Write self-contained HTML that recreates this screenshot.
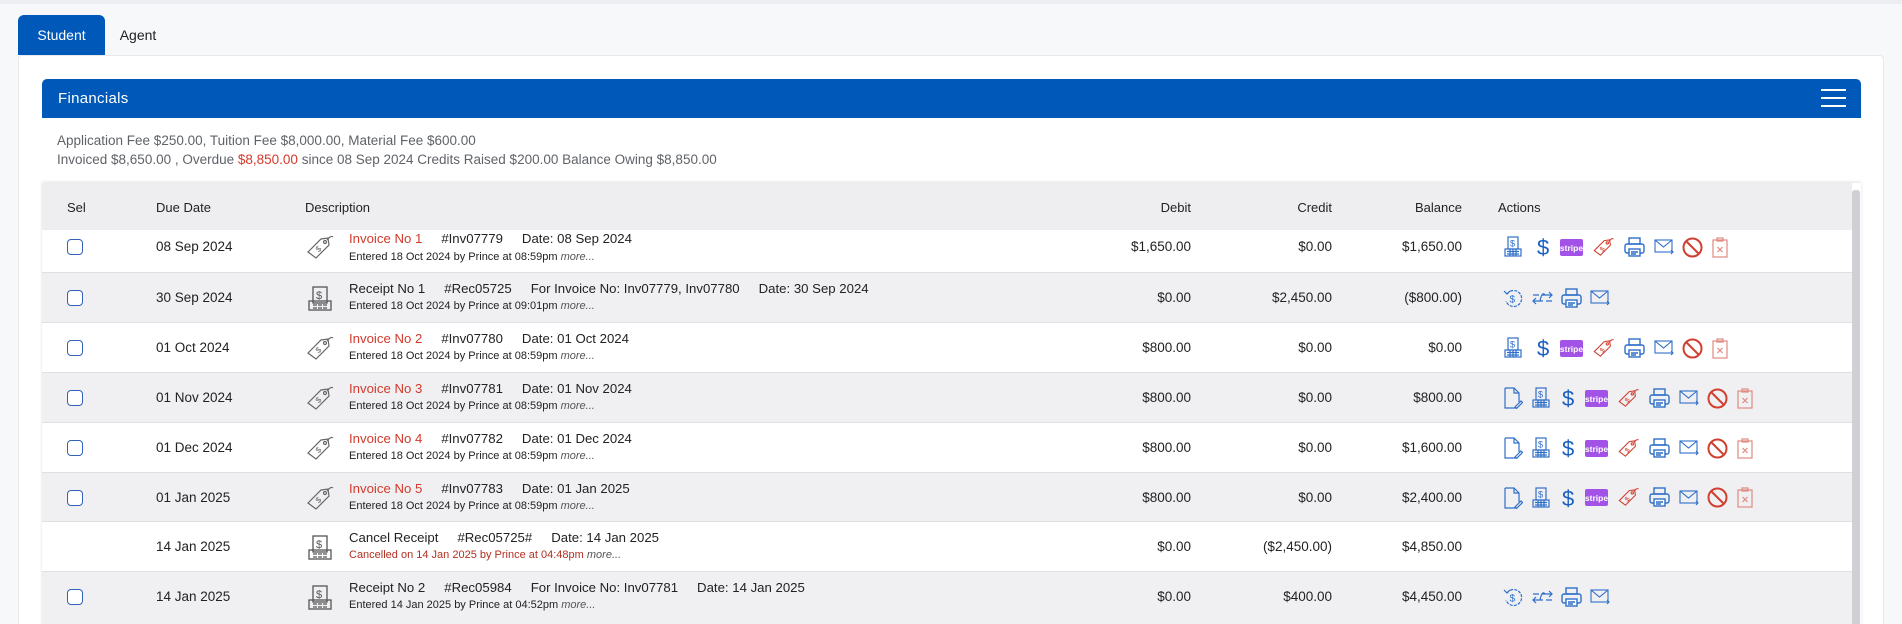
<!DOCTYPE html>
<html style="width:1902px;height:624px;overflow:hidden"><head><meta charset="utf-8">
<style>
*{box-sizing:border-box;margin:0;padding:0}
body{width:1902px;height:624px;overflow:hidden;background:#f7f8fa;font-family:"Liberation Sans",sans-serif;color:#222;position:relative}
.abs{position:absolute}
.topband{left:0;top:0;width:1902px;height:4px;background:#eceef1}
.tab{top:15px;height:40px;font-size:14px;line-height:40px;text-align:center}
.card{left:18px;top:55px;width:1866px;height:575px;background:#fff;border:1px solid #e8e9ec;border-radius:4px}
.fh{left:42px;top:79px;width:1819px;height:39px;background:#0059b8;border-radius:5px 5px 0 0;color:#fff;font-size:15px;line-height:39px;padding-left:16px;letter-spacing:.3px}
.sum{left:57px;font-size:13.5px;color:#5f6368;white-space:nowrap}
.tbl{left:42px;top:183px;width:1819px;height:445px;background:#fff;box-shadow:0 -1px 3px rgba(0,0,0,.12)}
.th{left:42px;top:183px;width:1810px;height:47px;background:#eeedf0;font-size:13px;color:#222}
.th span{position:absolute;top:17px}
.row{left:42px;width:1810px;border-bottom:1px solid #dfe0e3}
.row.g{background:#f0f0f2}
.cb{position:absolute;left:25px;width:16px;height:16px;border:1.5px solid #2f62b8;border-radius:4px;background:#fff}
.dt{position:absolute;left:114px;font-size:13.5px}
.ic{position:absolute;left:263px}
.m{position:absolute;left:307px;font-size:13.2px;white-space:nowrap}
.m b{font-weight:normal;margin-right:19px}
.red{color:#d33a2c}
.s{position:absolute;left:307px;font-size:11px;white-space:nowrap}
.s i{color:#555}
.n{position:absolute;font-size:13.5px;text-align:right;width:150px}
.acts{position:absolute;left:1461px;display:flex;align-items:center}
.acts svg{display:block}
.scroll{left:1852px;top:190px;width:8px;height:440px;background:#d0d0d4;border-radius:3px}
</style></head><body>
<div class="abs topband"></div>
<div class="abs tab" style="left:18px;width:87px;background:#0059b8;color:#fff;border-radius:6px 6px 0 0">Student</div>
<div class="abs tab" style="left:108px;width:60px;color:#222">Agent</div>
<div class="abs card"></div>
<div class="abs fh">Financials</div>
<svg class="abs" style="left:1821px;top:88px" width="25" height="20"><g stroke="#fff" stroke-width="2"><line x1="0" y1="2" x2="25" y2="2"/><line x1="0" y1="10" x2="25" y2="10"/><line x1="0" y1="18" x2="25" y2="18"/></g></svg>
<div class="abs sum" style="top:133px">Application Fee $250.00, Tuition Fee $8,000.00, Material Fee $600.00</div>
<div class="abs sum" style="top:152px">Invoiced $8,650.00 , Overdue <span class="red">$8,850.00</span> since 08 Sep 2024 Credits Raised $200.00 Balance Owing $8,850.00</div>
<div class="abs tbl"></div>
<div class="abs th"><span style="left:25px">Sel</span><span style="left:114px">Due Date</span><span style="left:263px">Description</span><span style="left:1100px;width:49px;text-align:right">Debit</span><span style="left:1240px;width:50px;text-align:right">Credit</span><span style="left:1370px;width:50px;text-align:right">Balance</span><span style="left:1456px">Actions</span></div>

<svg width="0" height="0" style="position:absolute">
<defs>
<symbol id="tag" viewBox="0 0 30 30"><g fill="none" stroke="#666" stroke-width="1.2"><path d="M3 19 L16 6 L23 5 L24 12 L11 25 Z"/><circle cx="20" cy="9" r="1.5"/><path d="M22 7 Q26 2 28 4"/><text x="11" y="19" font-size="8" fill="#666" stroke="none" transform="rotate(-45 13 16)" font-family="Liberation Sans">$</text></g></symbol>
<symbol id="rec" viewBox="0 0 30 30"><g fill="none" stroke="#555" stroke-width="1.3"><rect x="8" y="3" width="14" height="16"/><rect x="4" y="17" width="22" height="9"/><text x="11" y="15" font-size="11" fill="#555" stroke="none" font-family="Liberation Sans">$</text><path d="M8 21h4M13 21h4M18 21h4M8 24h4M13 24h4M18 24h4"/></g></symbol>
</defs></svg>

<div id="rows"></div>
<div class="abs scroll"></div>
<script>
var B='#2f6fc9',R='#d04030',RL='#e08a80';
var I={
rec:'<svg width="20" height="22" viewBox="0 0 20 22"><g fill="none" stroke="'+B+'" stroke-width="1.2"><rect x="5" y="1" width="10" height="12"/><text x="7" y="10.5" font-size="9" fill="'+B+'" stroke="none" font-family="Liberation Sans">$</text><rect x="2" y="13" width="16" height="7"/><path d="M4 15.5h12M4 18h12M7 13v7M10 13v7M13 13v7"/></g></svg>',
dol:'<svg width="14" height="22"><text x="1" y="19" font-size="22" fill="#1a5fbf" font-family="Liberation Sans">$</text></svg>',
stripe:'<svg width="23" height="17"><rect width="23" height="17" rx="2" fill="#a352e8"/><text x="11.5" y="12" font-size="8.5" font-weight="bold" fill="#fff" text-anchor="middle" font-family="Liberation Sans">stripe</text></svg>',
tag:'<svg width="23" height="23" viewBox="0 0 30 30"><g fill="none" stroke="'+R+'" stroke-width="1.4"><path d="M3 19 L16 6 L23 5 L24 12 L11 25 Z"/><circle cx="20" cy="9" r="1.5"/><path d="M22 7 Q26 2 28 4"/><text x="10" y="20" font-size="9" fill="'+R+'" stroke="none" transform="rotate(-45 13 16)" font-family="Liberation Sans">$</text></g></svg>',
print:'<svg width="21" height="21" viewBox="0 0 21 21"><g fill="none" stroke="'+B+'" stroke-width="1.4"><rect x="5" y="1" width="11" height="6"/><rect x="1" y="7" width="19" height="9" rx="2"/><rect x="5" y="12" width="11" height="7" fill="#fff"/><path d="M7 15h7M7 17h5"/></g></svg>',
mail:'<svg width="20" height="18" viewBox="0 0 20 18"><g fill="none" stroke="'+B+'" stroke-width="1.1"><rect x="1" y="2" width="17" height="12"/><path d="M1 2 L9.5 9 L18 2"/><path d="M13 14h6M17 12l2 2-2 2"/></g></svg>',
ban:'<svg width="21" height="21"><circle cx="10.5" cy="10.5" r="9" fill="none" stroke="'+R+'" stroke-width="2"/><line x1="4.5" y1="4.5" x2="16.5" y2="16.5" stroke="'+R+'" stroke-width="2"/></svg>',
clip:'<svg width="16" height="21"><g fill="none" stroke="'+RL+'" stroke-width="1.2"><rect x="1" y="3" width="14" height="17"/><rect x="5" y="1" width="6" height="3"/><path d="M5.5 10l5 5M10.5 10l-5 5"/></g></svg>',
edit:'<svg width="20" height="22"><g fill="none" stroke="'+B+'" stroke-width="1.2"><path d="M2 1h9l5 5v9M2 1v20h12"/><path d="M11 1v5h5"/><path d="M12 20l6-6 1.5 1.5-6 6z"/></g></svg>',
refund:'<svg width="20" height="20"><g fill="none" stroke="'+B+'" stroke-width="1.2"><path d="M4 6 A8 8 0 1 1 3 13" stroke-dasharray="3 1.2"/><path d="M1 3l3 3 3-3"/><text x="6.5" y="14.5" font-size="10" fill="'+B+'" stroke="none" font-family="Liberation Sans">$</text></g></svg>',
exch:'<svg width="21" height="18"><g fill="none" stroke="'+B+'" stroke-width="1.2"><path d="M1 6h6M10 6h10M17 3l3 3-3 3"/><path d="M20 12h-6M11 12H1M4 9l-3 3 3 3"/><path d="M8 12 Q10 2 13 6"/></g></svg>'
};
function acts(list){return list.map(function(a){return '<span style="margin-right:'+(a[1])+'px">'+I[a[0]]+'</span>';}).join('');}
var inv1=acts([['rec',13],['dol',10],['stripe',9],['tag',9],['print',9],['mail',8],['ban',9],['clip',0]]);
var inv2=acts([['edit',8],['rec',10],['dol',10],['stripe',9],['tag',9],['print',9],['mail',8],['ban',9],['clip',0]]);
var rc=acts([['refund',9],['exch',8],['print',8],['mail',0]]);
var rows=[
[230,43,0,1,'08 Sep 2024','tag','<b class="red">Invoice No 1</b><b>#Inv07779</b>Date: 08 Sep 2024','Entered 18 Oct 2024 by Prince at 08:59pm','$1,650.00','$0.00','$1,650.00',inv1],
[273,50,1,1,'30 Sep 2024','rec','<b>Receipt No 1</b><b>#Rec05725</b><b>For Invoice No: Inv07779, Inv07780</b>Date: 30 Sep 2024','Entered 18 Oct 2024 by Prince at 09:01pm','$0.00','$2,450.00','($800.00)',rc],
[323,50,0,1,'01 Oct 2024','tag','<b class="red">Invoice No 2</b><b>#Inv07780</b>Date: 01 Oct 2024','Entered 18 Oct 2024 by Prince at 08:59pm','$800.00','$0.00','$0.00',inv1],
[373,50,1,1,'01 Nov 2024','tag','<b class="red">Invoice No 3</b><b>#Inv07781</b>Date: 01 Nov 2024','Entered 18 Oct 2024 by Prince at 08:59pm','$800.00','$0.00','$800.00',inv2],
[423,50,0,1,'01 Dec 2024','tag','<b class="red">Invoice No 4</b><b>#Inv07782</b>Date: 01 Dec 2024','Entered 18 Oct 2024 by Prince at 08:59pm','$800.00','$0.00','$1,600.00',inv2],
[473,49,1,1,'01 Jan 2025','tag','<b class="red">Invoice No 5</b><b>#Inv07783</b>Date: 01 Jan 2025','Entered 18 Oct 2024 by Prince at 08:59pm','$800.00','$0.00','$2,400.00',inv2],
[522,50,0,0,'14 Jan 2025','rec','<b>Cancel Receipt</b><b>#Rec05725#</b>Date: 14 Jan 2025','<span style="color:#b03020">Cancelled on 14 Jan 2025 by Prince at 04:48pm</span>','$0.00','($2,450.00)','$4,850.00',''],
[572,60,1,1,'14 Jan 2025','rec','<b>Receipt No 2</b><b>#Rec05984</b><b>For Invoice No: Inv07781</b>Date: 14 Jan 2025','Entered 14 Jan 2025 by Prince at 04:52pm','$0.00','$400.00','$4,450.00',rc]
];
var h='';
rows.forEach(function(r,i){
var top=r[0],ht=r[1],first=i==0;
var mid=first?17:(i==7?25:ht/2);
var mt=first?1:8, st=first?21:27;
h+='<div class="abs row'+(r[2]?' g':'')+'" style="top:'+top+'px;height:'+ht+'px">'+
(r[3]?'<div class="cb" style="top:'+(mid-8)+'px"></div>':'')+
'<div class="dt" style="top:'+(mid-8)+'px">'+r[4]+'</div>'+
'<svg class="ic" style="top:'+(mid-14)+'px" width="30" height="30"><use href="#'+r[5]+'"/></svg>'+
'<div class="m" style="top:'+mt+'px">'+r[6]+'</div>'+
'<div class="s" style="top:'+st+'px">'+r[7]+' <i>more...</i></div>'+
'<div class="n" style="left:999px;top:'+(mid-8)+'px">'+r[8]+'</div>'+
'<div class="n" style="left:1140px;top:'+(mid-8)+'px">'+r[9]+'</div>'+
'<div class="n" style="left:1270px;top:'+(mid-8)+'px">'+r[10]+'</div>'+
'<div class="acts" style="top:'+(mid-11)+'px;height:22px">'+r[11]+'</div>'+
'</div>';
});
document.getElementById('rows').innerHTML=h;
</script>
</body></html>
